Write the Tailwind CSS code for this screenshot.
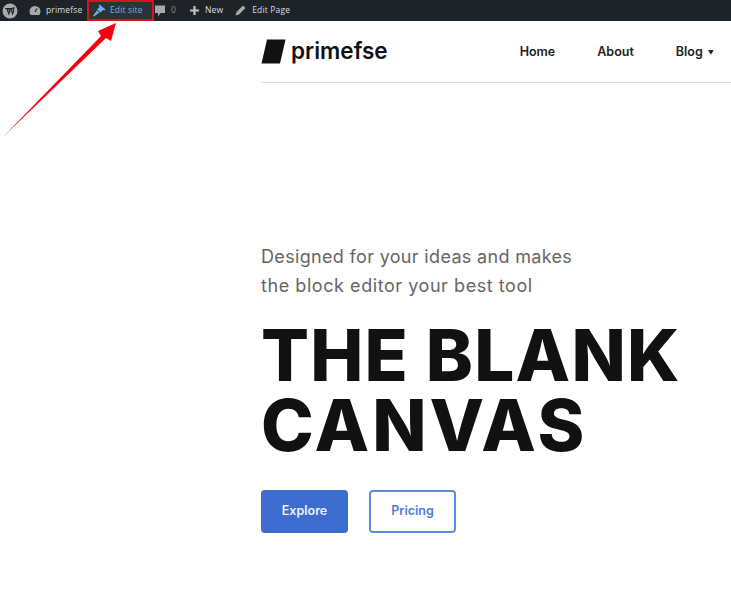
<!DOCTYPE html>
<html lang="en">
<head>
    <meta charset="UTF-8">
    <meta name="viewport" content="width=device-width, initial-scale=1.0">
    <title>primefse</title>
    <script src="https://cdn.jsdelivr.net/npm/@tailwindcss/browser@4"></script>
</head>
<body class="relative h-[595px] w-[731px] overflow-hidden bg-white font-['Inter',sans-serif]">

    <!-- Admin bar -->
    <div class="flex h-[21px] items-center bg-[#1d2327] font-['Open_Sans',sans-serif] text-[8.500px] tracking-[0.15px] text-[#dcdfe1]">
        <div class="flex w-[29px] items-center pl-[2px]">
            <svg width="16" height="16" viewBox="0 0 16 16">
                <circle cx="8" cy="8" r="7.500" fill="#a7aaad"/>
                <path d="M3 5.500h3.200v.5l-1 .2 1.600 4.600L8 7.600 7.200 6.200l-.7-.2v-.5h3.200v.5l-.8.2 1.700 4.600 1-3c.3-1-.1-1.700-.6-2.300l-.1-.4c.6-.4 1.300-.3 1.800.1" fill="none" stroke="#1d2327" stroke-width="1.200"/>
            </svg>
        </div>
        <div class="flex w-[59px] items-center gap-[5px]">
            <svg width="12" height="11" viewBox="0 0 12 11">
                <path d="M6 1a5.500 5.500 0 0 0-5.500 5.500c0 1.300.4 2.500 1.200 3.500h8.600c.8-1 1.200-2.200 1.200-3.500A5.500 5.500 0 0 0 6 1z" fill="#a7aaad"/>
                <path d="M6 7l2-3.500" stroke="#1d2327" stroke-width="1.200"/>
            </svg>
            <span class="font-medium">primefse</span>
        </div>
        <div class="flex h-[19px] w-[65px] items-center gap-[4px] bg-[#2c3338] pl-[4px] text-[#72aee6] outline-2 -outline-offset-1 outline-[#d9121f]">
            <svg width="14" height="13" viewBox="0 0 14 13">
                <path d="M7.500 0.500l6 5-1 1-1.500-.5-2.500 2.500-3.500-3 2.500-2.500-.8-1.300z M5 6.500l2.500 2L2 12.500l-1-.8z" fill="#72aee6"/>
            </svg>
            <span>Edit site</span>
        </div>
        <div class="flex items-center gap-[6px] pl-[2px]">
            <svg width="10" height="12" viewBox="0 0 10 12">
                <path d="M0 0.500h10v7.500H5.500l-2.500 3.500V8H0z" fill="#a7aaad"/>
            </svg>
            <span class="text-[#8c8f94]">0</span>
        </div>
        <div class="ml-[13px] flex items-center gap-[5px]">
            <svg width="11" height="11" viewBox="0 0 11 11">
                <path d="M5.500 1v9M1 5.500h9" stroke="#c3c4c7" stroke-width="2.200"/>
            </svg>
            <span>New</span>
        </div>
        <div class="ml-[12px] flex items-center gap-[6px]">
            <svg width="11" height="11" viewBox="0 0 11 11">
                <path d="M8 0.500l2.500 2.500-6.500 6.500L0.500 10.500l1-3.500z" fill="#a7aaad"/>
            </svg>
            <span>Edit Page</span>
        </div>
    </div>

    <!-- Page -->
    <main class="ml-[261px]">
        <header class="flex h-[62px] items-center justify-between border-b border-[#dcdcdc] pr-[17px]">
            <div class="flex items-center gap-[5px]">
                <svg width="25" height="25" viewBox="0 0 25 25">
                    <path d="M6 0.500h18.500L19 24.500H0.500z" fill="#111"/>
                </svg>
                <span class="text-[22.500px] font-semibold leading-none text-[#111]">primefse</span>
            </div>
            <nav class="flex items-center gap-[42px] pt-[1px] text-[12.500px] font-semibold text-[#222]">
                <a>Home</a>
                <a>About</a>
                <a class="flex items-center gap-[5px]">Blog <span class="text-[6px]">▼</span></a>
            </nav>
        </header>

        <section class="pt-[159px]">
            <p class="text-[18px] leading-[29px] tracking-[0.33px] text-[#666]">Designed for your ideas and makes<br><span class="tracking-[0.56px]">the block editor your best tool</span></p>
            <h1 class="mt-[20px] text-[71px] font-extrabold leading-[70px] tracking-[1.2px] text-[#111]">THE BLANK<br><span class="tracking-[3px]">CANVAS</span></h1>
            <div class="mt-[30px] flex gap-[21px]">
                <a class="flex h-[43px] w-[87px] items-center justify-center rounded-[4px] bg-[#3b6cce] text-[12.500px] font-semibold text-white/90">Explore</a>
                <a class="flex h-[43px] w-[87px] items-center justify-center rounded-[4px] border-2 border-[#5f8bdf] text-[12.500px] font-semibold text-[#4f7cd8]">Pricing</a>
            </div>
        </section>
    </main>

    <!-- Annotation arrow -->
    <svg class="absolute left-0 top-0" width="160" height="145" viewBox="0 0 160 145">
        <path d="M3 137L101 36L98 31L116 23L111 41L106 38Z" fill="#f5000f"/>
    </svg>

</body>
</html>
